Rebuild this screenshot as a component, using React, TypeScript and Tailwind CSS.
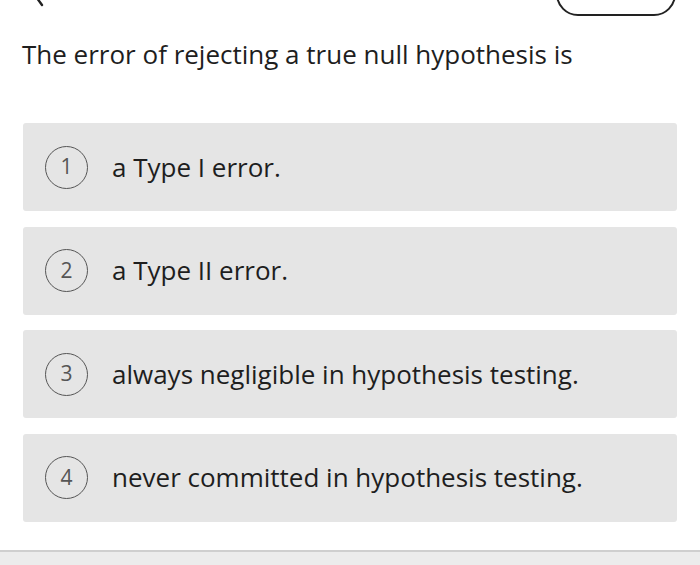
const options = [
  'a Type I error.',
  'a Type II error.',
  'always negligible in hypothesis testing.',
  'never committed in hypothesis testing.',
]

export default function App() {
  return (
    <div
      className="relative h-[565px] w-[700px] overflow-hidden bg-white text-[#1e1e1e]"
      style={{ fontFamily: '"Open Sans", sans-serif' }}
    >
      {/* top bar remnants */}
      <div className="flex h-[16px] items-end justify-between pl-[33px] pr-[24px]">
        <svg width="14" height="8" viewBox="0 0 14 8" className="self-start">
          <path d="M1 -6 L9 5" stroke="#222" strokeWidth="2.4" fill="none" strokeLinecap="round" />
        </svg>
        <div className="-mt-[40px] h-[56px] w-[120px] rounded-[22px] border-2 border-[#222]" />
      </div>

      <h1 className="mt-[20px] pl-[22px] text-[26px] leading-[36px]">
        The error of rejecting a true null hypothesis is
      </h1>

      <div className="mt-[51px] flex flex-col gap-[15.5px] px-[23px]">
        {options.map((text, i) => (
          <div key={i} className="flex h-[88px] items-center rounded-[3px] bg-[#e5e5e5] pl-[22px]">
            <div className="flex h-[43px] w-[43px] shrink-0 items-center justify-center rounded-full border-[1.5px] border-[#555] text-[21px] text-[#555]">
              {i + 1}
            </div>
            <span className="ml-[24px] text-[26px] text-[#1e1e1e]">{text}</span>
          </div>
        ))}
      </div>

      <div className="absolute bottom-0 left-0 h-[15px] w-full border-t-2 border-[#cfcfcf] bg-[#ececec]" />
    </div>
  )
}
